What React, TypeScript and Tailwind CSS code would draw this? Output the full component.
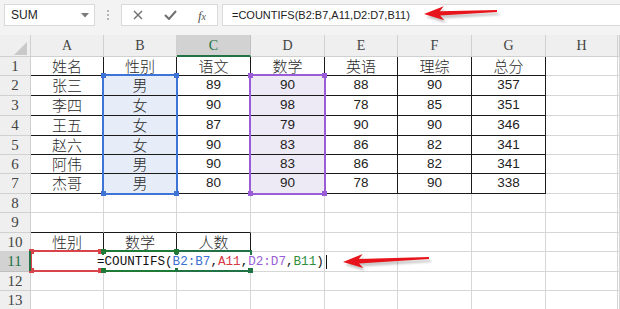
import React from "react";

const data: string[][] = [
  ["姓名", "性别", "语文", "数学", "英语", "理综", "总分"],
  ["张三", "男", "89", "90", "88", "90", "357"],
  ["李四", "女", "90", "98", "78", "85", "351"],
  ["王五", "女", "87", "79", "90", "90", "346"],
  ["赵六", "女", "90", "83", "86", "82", "341"],
  ["阿伟", "男", "90", "83", "86", "82", "341"],
  ["杰哥", "男", "80", "90", "78", "90", "338"],
  [],
  [],
  ["性别", "数学", "人数"],
  [],
  [],
  [],
];

const rowH = [
  "h-[19px]", "h-[20px]", "h-[20px]", "h-[20px]", "h-[19px]", "h-[19px]", "h-[20px]",
  "h-[19px]", "h-[20px]", "h-[19px]", "h-[20px]", "h-[19px]", "h-[19px]",
];

const cols = ["A", "B", "C", "D", "E", "F", "G", "H", ""];

const isCJK = (s: string) => /[\u4e00-\u9fff]/.test(s);

function Handle({ cls }: { cls: string }) {
  return <div className={`absolute w-[5px] h-[5px] ${cls}`} />;
}

function Arrow({ x1, y1, x2, y2 }: { x1: number; y1: number; x2: number; y2: number }) {
  const dx = x2 - x1;
  const dy = y2 - y1;
  const len = Math.hypot(dx, dy);
  const ux = dx / len;
  const uy = dy / len;
  const px = -uy;
  const py = ux;
  const headL = 20;
  const headW = 7;
  const bx = x2 - ux * headL;
  const by = y2 - uy * headL;
  const shaftTail = 1;
  const shaftHead = 2.2;
  const pts = (ox: number, oy: number) =>
    [
      [x1 + px * shaftTail + ox, y1 + py * shaftTail + oy],
      [bx + ux * 4 + px * shaftHead + ox, by + uy * 4 + py * shaftHead + oy],
      [bx + px * headW + ox, by + py * headW + oy],
      [x2 + ox, y2 + oy],
      [bx - px * headW + ox, by - py * headW + oy],
      [bx + ux * 4 - px * shaftHead + ox, by + uy * 4 - py * shaftHead + oy],
      [x1 - px * shaftTail + ox, y1 - py * shaftTail + oy],
    ]
      .map((p) => p.join(","))
      .join(" ");
  return (
    <>
      <polygon points={pts(2, 3)} fill="rgba(0,0,0,0.22)" filter="url(#blur)" />
      <polygon points={pts(0, 0)} fill="#e8141b" />
    </>
  );
}

export default function App() {
  return (
    <div className="relative w-[620px] h-[309px] overflow-hidden bg-white" style={{ fontFamily: "'Liberation Sans', Arial, sans-serif" }}>
      {/* Formula bar */}
      <div className="h-[35px] bg-[#f3f3f3] flex items-start pt-[4px] pl-[4px]">
        <div className="w-[91px] h-[22px] bg-white border border-[#d9d9d9] flex items-center justify-between pl-[6px] pr-[5px]">
          <span className="text-[12px] text-[#222]">SUM</span>
          <svg width="8" height="5" viewBox="0 0 8 5"><polygon points="0,0 8,0 4,4.5" fill="#7a7a7a" /></svg>
        </div>
        <div className="w-[26px] h-[22px] flex flex-col items-center justify-center gap-[2px]">
          <div className="w-[2px] h-[2px] bg-[#b5b5b5]" />
          <div className="w-[2px] h-[2px] bg-[#b5b5b5]" />
          <div className="w-[2px] h-[2px] bg-[#b5b5b5]" />
        </div>
        <div className="w-[97px] h-[22px] bg-white border border-[#d9d9d9] flex items-center">
          <div className="w-[32px] flex justify-center">
            <svg width="10" height="10" viewBox="0 0 10 10"><path d="M1 1 L9 9 M9 1 L1 9" stroke="#6f6f6f" strokeWidth="1.4" /></svg>
          </div>
          <div className="w-[33px] flex justify-center">
            <svg width="13" height="10" viewBox="0 0 13 10"><path d="M1 5 L5 9 L12 1" stroke="#6f6f6f" strokeWidth="2" fill="none" /></svg>
          </div>
          <div className="w-[30px] flex justify-center items-end text-[#555]" style={{ fontFamily: "'Liberation Serif', serif" }}>
            <span className="italic text-[13px] leading-none">f</span>
            <span className="italic text-[10px] leading-none">x</span>
          </div>
        </div>
        <div className="ml-[4px] flex-1 h-[22px] bg-white border border-[#d9d9d9] border-r-0 flex items-center pl-[9px]">
          <span className="text-[11px] text-[#222]">=COUNTIFS(B2:B7,A11,D2:D7,B11)</span>
        </div>
      </div>

      {/* Sheet */}
      <div className="relative">
        <div className="grid grid-cols-[31px_73px_73px_74px_74px_73px_74px_74px_72px_1fr]">
          <div className="h-[22px] bg-[#efefef] border-r border-b border-[#d0d0d0] relative">
            <svg className="absolute left-[14px] top-[7px]" width="13" height="13" viewBox="0 0 13 13"><polygon points="13,0 13,13 0,13" fill="#c9c9c9" /></svg>
          </div>
          {cols.map((c, i) =>
            c === "C" ? (
              <div key={i} className="h-[22px] bg-[#d2d2d2] border-r border-r-[#c0c0c0] border-b-2 border-b-[#217346] flex items-center justify-center text-[#217346] text-[14px]" style={{ fontFamily: "'Liberation Serif', serif" }}>
                {c}
              </div>
            ) : (
              <div key={i} className="h-[22px] bg-[#efefef] border-r border-b border-[#d0d0d0] flex items-center justify-center text-[#444] text-[14px]" style={{ fontFamily: "'Liberation Serif', serif" }}>
                {c}
              </div>
            )
          )}
          {rowH.map((h, r) => {
            const rowNum = r + 1;
            const cells: React.ReactNode[] = [];
            cells.push(
              rowNum === 11 ? (
                <div key="h" className={`${h} bg-[#d2d2d2] border-b border-b-[#c0c0c0] border-r-2 border-r-[#217346] flex items-center justify-center text-[#217346] text-[15px]`} style={{ fontFamily: "'Liberation Serif', serif" }}>
                  {rowNum}
                </div>
              ) : (
                <div key="h" className={`${h} bg-[#efefef] border-r border-b border-[#d0d0d0] flex items-center justify-center text-[#444] text-[15px]`} style={{ fontFamily: "'Liberation Serif', serif" }}>
                  {rowNum}
                </div>
              )
            );
            for (let c = 0; c < 9; c++) {
              const v = data[r][c] ?? "";
              const inTable = rowNum <= 7 && c <= 6;
              let border = "border-r border-b border-[#d6d6d6]";
              if (inTable) border = "border-r border-b border-[#1a1a1a]";
              else if (rowNum === 9 && c <= 2) border = "border-r border-b border-r-[#d6d6d6] border-b-[#1a1a1a]";
              else if (rowNum === 10 && c <= 2) border = "border-r border-b border-r-[#1a1a1a] border-b-[#d6d6d6]";
              let bg = "";
              if (rowNum >= 2 && rowNum <= 7 && c === 1) bg = "bg-[#e7edf8]";
              if (rowNum >= 2 && rowNum <= 7 && c === 3) bg = "bg-[#edeaf5]";
              cells.push(
                <div
                  key={c}
                  className={`${h} ${border} ${bg} flex items-center justify-center whitespace-nowrap ${isCJK(v) ? "text-[15px] text-[#2a2a2a]" : "text-[13.5px] text-[#222]"}`}
                  style={isCJK(v) ? { fontFamily: "'Noto Sans CJK SC', sans-serif", fontWeight: 300 } : undefined}
                >
                  {v}
                </div>
              );
            }
            return <React.Fragment key={r}>{cells}</React.Fragment>;
          })}
        </div>

        {/* selection overlays (coordinates relative to sheet top at y=35) */}
        <div className="absolute left-[102px] top-[39px] w-[76px] h-[121px] border-2 border-[#3d74d6] pointer-events-none" />
        <Handle cls="left-[101px] top-[38px] bg-[#3d74d6]" />
        <Handle cls="left-[174px] top-[38px] bg-[#3d74d6]" />
        <Handle cls="left-[101px] top-[156px] bg-[#3d74d6]" />
        <Handle cls="left-[174px] top-[156px] bg-[#3d74d6]" />

        <div className="absolute left-[249px] top-[39px] w-[77px] h-[121px] border-2 border-[#9b5cd8] pointer-events-none" />
        <Handle cls="left-[248px] top-[38px] bg-[#9b5cd8]" />
        <Handle cls="left-[322px] top-[38px] bg-[#9b5cd8]" />
        <Handle cls="left-[248px] top-[156px] bg-[#9b5cd8]" />
        <Handle cls="left-[322px] top-[156px] bg-[#9b5cd8]" />

        <div className="absolute left-[30px] top-[215px] w-[74px] h-[22px] border-2 border-[#d9434a] pointer-events-none" />
        <Handle cls="left-[29px] top-[214px] bg-[#d9434a]" />
        <Handle cls="left-[98px] top-[214px] bg-[#d9434a]" />
        <Handle cls="left-[29px] top-[233px] bg-[#d9434a]" />
        <Handle cls="left-[98px] top-[233px] bg-[#d9434a]" />

        <div className="absolute left-[102px] top-[215px] w-[76px] h-[22px] border-2 border-[#1f7a35] pointer-events-none" />
        <div className="absolute left-[175px] top-[215px] w-[77px] h-[22px] border-2 border-[#217346] pointer-events-none" />
        <Handle cls="left-[101px] top-[214px] bg-[#1f7a35]" />
        <Handle cls="left-[174px] top-[214px] bg-[#1f7a35]" />
        <Handle cls="left-[101px] top-[233px] bg-[#1f7a35]" />
        <Handle cls="left-[248px] top-[233px] bg-[#217346]" />
        <div className="absolute left-[29px] top-[216px] w-[2px] h-[20px] bg-[#217346]" />

        {/* in-cell formula being edited (overflows over neighbouring cells) */}
        <div className="absolute left-[97px] top-[217px] h-[19px] flex items-center whitespace-nowrap z-20">
          <span className="text-[12.6px] leading-none pt-[1px] text-[#111] bg-white" style={{ fontFamily: "'Liberation Mono', monospace" }}>
            =COUNTIFS(<span className="text-[#3b6fd0]">B2:B7</span>,<span className="text-[#d8383f]">A11</span>,<span className="text-[#9a5fd6]">D2:D7</span>,<span className="text-[#2f8f3a]">B11</span>)
          </span>
          <div className="ml-[2px] w-[1px] h-[14px] bg-[#111]" />
        </div>
      </div>

      <svg className="absolute left-0 top-0 pointer-events-none" width="620" height="309">
        <defs>
          <filter id="blur" x="-20%" y="-50%" width="140%" height="200%">
            <feGaussianBlur stdDeviation="1.3" />
          </filter>
        </defs>
        <Arrow x1={497} y1={11} x2={424} y2={14} />
        <Arrow x1={429} y1={258} x2={343} y2={262} />
      </svg>
    </div>
  );
}
